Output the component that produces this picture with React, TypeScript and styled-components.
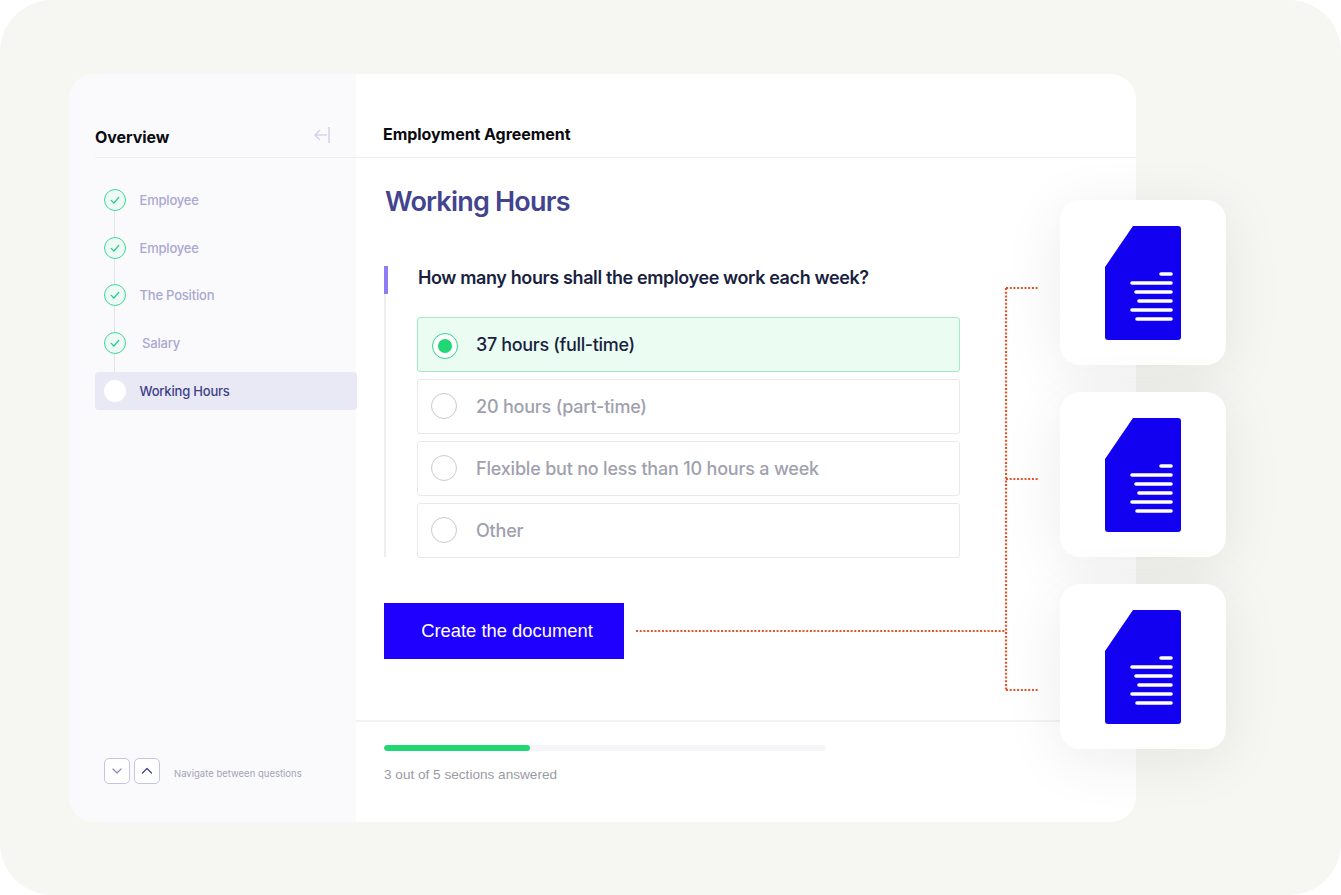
import React from "react";
import styled, { createGlobalStyle } from "styled-components";

const Global = createGlobalStyle`
  html, body { margin: 0; padding: 0; background: #fff; }
  body { font-family: Inter, "Liberation Sans", sans-serif; }
  * { box-sizing: border-box; }
`;

const Stage = styled.div`
  width: 1341px;
  height: 895px;
  padding: 74px 0 0 69px;
  background: #f6f7f2;
  border-radius: 52px;
  overflow: hidden;
`;

const Card = styled.div`
  position: relative;
  display: flex;
  width: 1067px;
  height: 748px;
  background: #fff;
  border-radius: 26px;
`;

const Sidebar = styled.aside`
  display: flex;
  flex-direction: column;
  width: 287px;
  padding-left: 26px;
  background: #fafafd;
  border-radius: 26px 0 0 26px;
`;

const SideHeader = styled.div`
  display: flex;
  align-items: flex-end;
  justify-content: space-between;
  height: 84px;
  padding: 0 25px 10px 0;
  border-bottom: 1px solid #eeeef2;
`;

const SideTitle = styled.h2`
  margin: 0;
  font-size: 16px;
  line-height: 20px;
  font-weight: 700;
  letter-spacing: -0.05px;
  color: #0a0a0f;
`;

const StepList = styled.ol`
  display: flex;
  flex-direction: column;
  gap: 9.67px;
  margin: 0;
  padding: 23px 0 0;
  list-style: none;
`;

const Step = styled.li<{ $active?: boolean; $last?: boolean }>`
  position: relative;
  display: flex;
  align-items: center;
  height: 38px;
  margin-right: ${(p) => (p.$active ? "-1px" : "0")};
  padding-left: 9px;
  border-radius: 4px;
  background: ${(p) => (p.$active ? "#e8e9f5" : "transparent")};
  ${(p) =>
    p.$last
      ? ""
      : `&::after {
    content: "";
    position: absolute;
    left: 19px;
    top: 30px;
    width: 1px;
    height: 28px;
    background: #e4e4ee;
  }`}
`;

const StepDot = styled.span<{ $done?: boolean }>`
  position: relative;
  z-index: 1;
  display: flex;
  align-items: center;
  justify-content: center;
  flex: none;
  width: 22px;
  height: 22px;
  border-radius: 50%;
  background: ${(p) => (p.$done ? "#eefaf5" : "#fff")};
  border: ${(p) => (p.$done ? "1px solid #3fd898" : "none")};
`;

const StepLabel = styled.span<{ $active?: boolean; $shift?: boolean }>`
  margin-left: ${(p) => (p.$shift ? "16px" : "13.500px")};
  font-size: 13px;
  font-weight: 500;
  letter-spacing: -0.2px;
  color: ${(p) => (p.$active ? "#3f4088" : "#a9a8d0")};
`;

const SideFooter = styled.div`
  display: flex;
  align-items: center;
  gap: 4px;
  margin-top: auto;
  padding: 0 0 38px 9px;
`;

const NavButton = styled.span`
  display: flex;
  align-items: center;
  justify-content: center;
  width: 26px;
  height: 26px;
  border: 1px solid #c6c5e2;
  border-radius: 5px;
  background: #fff;
`;

const NavHint = styled.span`
  margin-left: 10px;
  padding-top: 5px;
  font-size: 9.5px;
  color: #a3a3b5;
`;

const Main = styled.main`
  display: flex;
  flex: 1;
  flex-direction: column;
  min-width: 0;
`;

const MainHeader = styled.div`
  display: flex;
  align-items: flex-end;
  height: 84px;
  padding: 0 0 13px 27px;
  border-bottom: 1px solid #eeeef2;
`;

const DocName = styled.h2`
  margin: 0;
  font-size: 16px;
  line-height: 20px;
  font-weight: 700;
  letter-spacing: -0.05px;
  color: #0a0a0f;
`;

const Body = styled.div`
  padding: 27px 0 0 28px;
`;

const PageTitle = styled.h1`
  margin: 0 0 0 1px;
  font-size: 27px;
  line-height: 34px;
  font-weight: 600;
  letter-spacing: -0.8px;
  color: #43448f;
`;

const QuestionBlock = styled.section`
  position: relative;
  margin-top: 47px;
  height: 291px;
  padding-left: 31px;
  border-left: 2px solid #eeeef2;
  &::before {
    content: "";
    position: absolute;
    left: -2px;
    top: 0;
    width: 4px;
    height: 28px;
    background: #927cf6;
  }
`;

const Question = styled.p`
  margin: 0 0 27px 1px;
  font-size: 18px;
  line-height: 24px;
  font-weight: 600;
  letter-spacing: -0.38px;
  color: #1a1f3f;
`;

const Options = styled.div`
  display: flex;
  flex-direction: column;
  gap: 7px;
  width: 543px;
`;

const Option = styled.div<{ $selected?: boolean }>`
  display: flex;
  align-items: center;
  height: 55px;
  padding-left: 13px;
  border: 1px solid ${(p) => (p.$selected ? "#a5e8c6" : "#e9e9ed")};
  border-radius: 3px;
  background: ${(p) => (p.$selected ? "#ebfcf3" : "#fff")};
`;

const Radio = styled.span<{ $selected?: boolean }>`
  display: flex;
  align-items: center;
  justify-content: center;
  flex: none;
  width: 26px;
  height: 26px;
  margin-top: ${(p) => (p.$selected ? "2px" : "-1px")};
  margin-left: ${(p) => (p.$selected ? "1px" : "0")};
  margin-right: ${(p) => (p.$selected ? "18px" : "19px")};
  border-radius: 50%;
  border: 1px solid ${(p) => (p.$selected ? "#2fd68a" : "#c9c9d3")};
  background: #fff;
  &::after {
    content: "";
    display: ${(p) => (p.$selected ? "block" : "none")};
    width: 14px;
    height: 14px;
    border-radius: 50%;
    background: #1fd873;
  }
`;

const OptionText = styled.span<{ $selected?: boolean }>`
  font-size: 18px;
  font-weight: 500;
  letter-spacing: ${(p) => (p.$selected ? "-0.35px" : "-0.2px")};
  color: ${(p) => (p.$selected ? "#1a1f3f" : "#a0a1ad")};
`;

const CreateButton = styled.button`
  display: block;
  width: 240px;
  height: 56px;
  margin-top: 46px;
  padding: 0 0 0 6px;
  border: 0;
  background: #1f00ff;
  color: #fff;
  font-family: "Liberation Sans", Arial, sans-serif;
  font-size: 18.4px;
`;

const Progress = styled.div`
  margin-top: auto;
  height: 102px;
  padding: 23px 0 0 28px;
  border-top: 2px solid #f3f3f5;
`;

const Track = styled.div`
  width: 442px;
  height: 6px;
  border-radius: 3px;
  background: #f6f6f8;
  overflow: hidden;
`;

const Fill = styled.div`
  height: 100%;
  border-radius: 3px;
  background: #1fd873;
`;

const ProgressText = styled.p`
  margin: 15px 0 0;
  font-family: "Liberation Sans", Arial, sans-serif;
  font-size: 13.600px;
  line-height: 18px;
  color: #9a9ba5;
`;

const Connectors = styled.svg`
  position: absolute;
  left: -69px;
  top: -74px;
  pointer-events: none;
`;

const DocStack = styled.div`
  position: absolute;
  top: 126px;
  right: -90px;
  display: flex;
  flex-direction: column;
  gap: 27px;
`;

const DocCard = styled.div`
  display: flex;
  align-items: center;
  justify-content: center;
  width: 166px;
  height: 165px;
  border-radius: 20px;
  background: #fff;
  box-shadow: 0 10px 60px rgba(30, 30, 30, 0.08);
`;

const Check = () => (
  <svg width="12" height="12" viewBox="0 0 12 12" fill="none">
    <path d="M2.2 6.4 4.9 9 9.8 3.4" stroke="#22c985" strokeWidth="1.2" strokeLinecap="round" strokeLinejoin="round" />
  </svg>
);

const CollapseIcon = () => (
  <svg width="18" height="18" viewBox="0 0 18 18" fill="none" style={{ marginBottom: 3 }}>
    <path d="M16 1v16M14 9H2M7 4 2 9l5 5" stroke="#d6d5ea" strokeWidth="1.6" />
  </svg>
);

const Chevron = ({ up }: { up?: boolean }) => (
  <svg width="12" height="12" viewBox="0 0 12 12" fill="none">
    <path
      d={up ? "M1.5 8 6 3.5 10.500 8" : "M2 4l4 4 4-4"}
      stroke={up ? "#3f4088" : "#8a89bd"}
      strokeWidth="1.200"
      strokeLinecap="round"
      strokeLinejoin="round"
    />
  </svg>
);

const DocIcon = () => (
  <svg width="76" height="114" viewBox="0 0 76 114" fill="none">
    <path
      d="M28 0H73a3 3 0 0 1 3 3V111a3 3 0 0 1-3 3H3a3 3 0 0 1-3-3V41Z"
      fill="#1200f0"
    />
    {[
      [54, 48],
      [25, 57],
      [29, 66],
      [32, 75],
      [25, 84],
      [30, 93],
    ].map(([x, y]) => (
      <line key={y} x1={x + 2} x2="66" y1={y} y2={y} stroke="#fff" strokeWidth="3.600" strokeLinecap="round" />
    ))}
  </svg>
);

const steps = ["Employee", "Employee", "The Position", "Salary"];
const options = ["20 hours (part-time)", "Flexible but no less than 10 hours a week", "Other"];

export default function App() {
  return (
    <>
      <Global />
      <Stage>
        <Card>
          <Sidebar>
            <SideHeader>
              <SideTitle>Overview</SideTitle>
              <CollapseIcon />
            </SideHeader>
            <StepList>
              {steps.map((s, i) => (
                <Step key={i}>
                  <StepDot $done>
                    <Check />
                  </StepDot>
                  <StepLabel $shift={s === "Salary"}>{s}</StepLabel>
                </Step>
              ))}
              <Step $active $last>
                <StepDot />
                <StepLabel $active>Working Hours</StepLabel>
              </Step>
            </StepList>
            <SideFooter>
              <NavButton>
                <Chevron />
              </NavButton>
              <NavButton>
                <Chevron up />
              </NavButton>
              <NavHint>Navigate between questions</NavHint>
            </SideFooter>
          </Sidebar>
          <Main>
            <MainHeader>
              <DocName>Employment Agreement</DocName>
            </MainHeader>
            <Body>
              <PageTitle>Working Hours</PageTitle>
              <QuestionBlock>
                <Question>How many hours shall the employee work each week?</Question>
                <Options>
                  <Option $selected>
                    <Radio $selected />
                    <OptionText $selected>37 hours (full-time)</OptionText>
                  </Option>
                  {options.map((o) => (
                    <Option key={o}>
                      <Radio />
                      <OptionText>{o}</OptionText>
                    </Option>
                  ))}
                </Options>
              </QuestionBlock>
              <CreateButton>Create the document</CreateButton>
            </Body>
            <Progress>
              <Track>
                <Fill style={{ width: `${(146 / 442) * 100}%` }} />
              </Track>
              <ProgressText>3 out of 5 sections answered</ProgressText>
            </Progress>
          </Main>
          <Connectors width="1341" height="895" fill="none">
            <path
              d="M636 631H1006M1006 288V690M1006 288H1038M1006 479H1038M1006 690H1038"
              stroke="#e2542c"
              strokeWidth="2.200"
              strokeDasharray="2 1.700"
            />
          </Connectors>
          <DocStack>
            {[0, 1, 2].map((i) => (
              <DocCard key={i}>
                <DocIcon />
              </DocCard>
            ))}
          </DocStack>
        </Card>
      </Stage>
    </>
  );
}
